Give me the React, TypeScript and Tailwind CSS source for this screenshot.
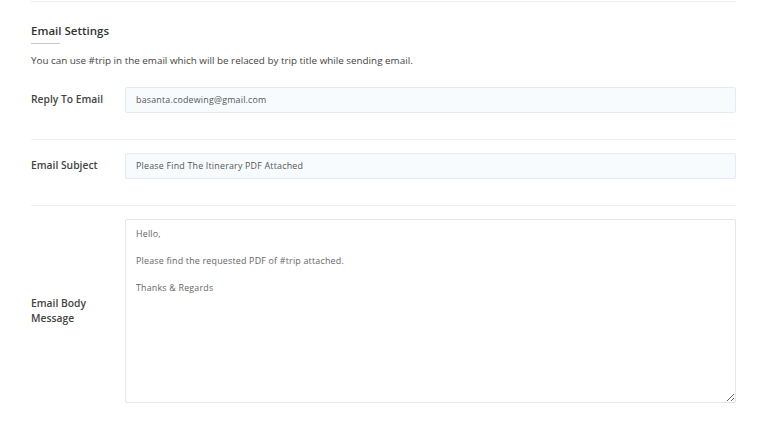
export default function App() {
  return (
    <div className="w-[768px] h-[432px] bg-white overflow-hidden font-['Open_Sans',sans-serif] text-[#333]">
      <div className="mx-[31px] w-[705px]">
        <div className="h-[1px] bg-[#eeeeee] mt-[1px]" />

        {/* Heading */}
        <div className="mt-[21px]">
          <h2 className="text-[11.5px] font-semibold text-[#333] leading-[16px]">Email Settings</h2>
          <div className="mt-[4px] h-[1px] w-[29px] bg-[#c8c8c8]" />
          <p className="mt-[9px] text-[9.85px] text-[#444] leading-[14px]">
            You can use #trip in the email which will be relaced by trip title while sending email.
          </p>
        </div>

        {/* Reply To Email */}
        <div className="mt-[20px] flex items-center">
          <label className="w-[94px] text-[10.3px] font-semibold text-[#444]">Reply To Email</label>
          <div className="flex-1 h-[26px] flex items-center px-[10px] bg-[#f8fbfe] border border-[#e2ecf8] rounded-[2px] text-[8.9px] text-[#555] tracking-[0.2px]">
            basanta.codewing@gmail.com
          </div>
        </div>
        <div className="mt-[26px] h-[1px] bg-[#efefef]" />

        {/* Email Subject */}
        <div className="mt-[13px] flex items-center">
          <label className="w-[94px] text-[10.3px] font-semibold text-[#444]">Email Subject</label>
          <div className="flex-1 h-[26px] flex items-center px-[10px] bg-[#f8fbfe] border border-[#e2ecf8] rounded-[2px] text-[8.9px] text-[#555] tracking-[0.2px]">
            Please Find The Itinerary PDF Attached
          </div>
        </div>
        <div className="mt-[26px] h-[1px] bg-[#efefef]" />

        {/* Email Body */}
        <div className="mt-[13px] flex items-center">
          <label className="w-[94px] text-[10.3px] font-semibold text-[#444] leading-[15px]">
            Email Body
            <br />
            Message
          </label>
          <textarea
            className="flex-1 h-[184px] px-[10px] pt-[7px] bg-white border border-[#e6e6e6] rounded-[2px] text-[8.9px] text-[#666] leading-[13.5px] tracking-[0.2px] outline-none resize-y"
            defaultValue={'Hello,\n\nPlease find the requested PDF of #trip attached.\n\nThanks & Regards'}
          />
        </div>
      </div>
    </div>
  )
}
